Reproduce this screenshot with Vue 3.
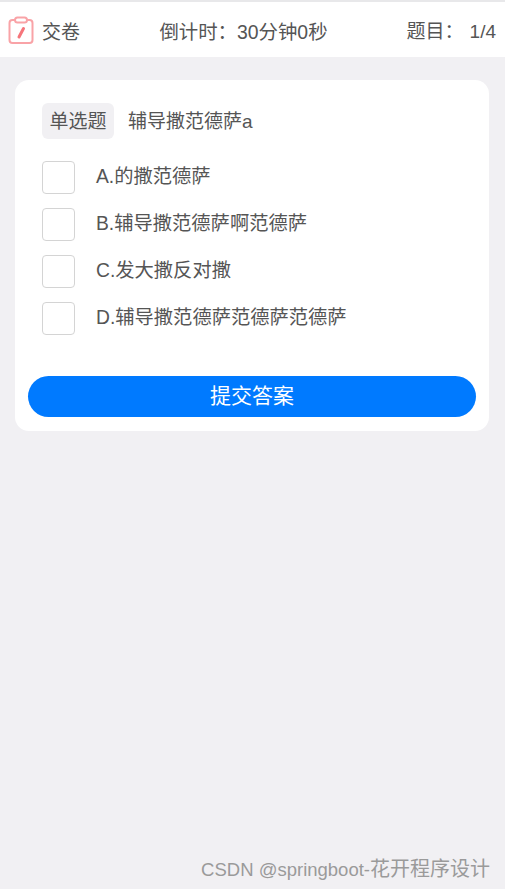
<template>
  <div class="page">
    <header class="topbar">
      <div class="hand-in">
        <svg class="paper-icon" viewBox="0 0 26 28" width="26" height="28" fill="none">
          <path d="M7 4H4.500A3 3 0 0 0 1.500 7v17a3 3 0 0 0 3 3h17a3 3 0 0 0 3-3V7a3 3 0 0 0-3-3H19" stroke="#f9a3a7" stroke-width="2" />
          <rect x="7" y="1.500" width="12" height="5" rx="2.500" stroke="#f9a3a7" stroke-width="2" />
          <path d="M15.500 12.500l-4.500 8.500" stroke="#f6757b" stroke-width="3" stroke-linecap="round" />
        </svg>
        <span class="hand-text">交卷</span>
      </div>
      <div class="countdown">倒计时：30分钟0秒</div>
      <div class="progress">
        <span>题目：</span>
        <span class="num">1/4</span>
      </div>
    </header>

    <section class="card">
      <div class="question">
        <span class="tag">单选题</span>
        <span class="title">辅导撒范德萨a</span>
      </div>
      <ul class="options">
        <li v-for="item in options" :key="item" class="option">
          <span class="check"></span>
          <span class="label">{{ item }}</span>
        </li>
      </ul>
      <button class="submit" type="button">提交答案</button>
    </section>

    <div class="watermark"><span class="mark-latin">CSDN @springboot-</span>花开程序设计</div>
  </div>
</template>

<script setup>
const options = [
  'A.的撒范德萨',
  'B.辅导撒范德萨啊范德萨',
  'C.发大撒反对撒',
  'D.辅导撒范德萨范德萨范德萨',
];
</script>

<style>
html,
body {
  margin: 0;
  background: #f1f0f3;
}
</style>

<style scoped>
.page {
  position: relative;
  box-sizing: border-box;
  min-height: 889px;
  border-top: 2px solid #e8e8ea;
  background: #f1f0f3;
  color: #555;
  font-family: "Liberation Sans", "Noto Sans CJK SC", sans-serif;
  font-size: 19px;
  overflow: hidden;
}

.topbar {
  display: grid;
  grid-template-columns: 1fr auto 1fr;
  align-items: center;
  height: 55px;
  padding: 0 9px 0 8px;
  background: #fff;
}

.hand-in {
  display: flex;
  align-items: center;
  gap: 8px;
}

.paper-icon {
  flex: none;
  margin-top: 1px;
}

.hand-text {
  padding-top: 2px;
}

.countdown {
  margin-right: 17px;
  font-size: 19.400px;
  line-height: 26px;
  padding-top: 4px;
}

.progress {
  display: flex;
  justify-content: flex-end;
  align-items: center;
  line-height: 26px;
  padding-top: 4px;
}

.num {
  margin-left: 6px;
}

.card {
  margin: 23px 16px 0 15px;
  padding: 23px 13px 14px;
  background: #fff;
  border-radius: 14px;
}

.question {
  display: flex;
  align-items: center;
  padding-left: 14px;
}

.tag {
  box-sizing: border-box;
  width: 72px;
  height: 36px;
  line-height: 38px;
  text-align: center;
  background: #f1f0f3;
  border-radius: 6px;
}

.title {
  margin-left: 14px;
  padding-bottom: 4px;
}

.options {
  list-style: none;
  margin: 22px 0 0;
  padding: 0 0 0 14px;
  display: flex;
  flex-direction: column;
  gap: 14px;
}

.option {
  display: flex;
  align-items: center;
  height: 33px;
}

.check {
  box-sizing: border-box;
  width: 33px;
  height: 33px;
  background: #fff;
  border: 1px solid #d4d4d4;
  border-radius: 4px;
}

.label {
  margin-left: 21px;
  padding-bottom: 5px;
  font-size: 19.300px;
}

.submit {
  display: block;
  width: 100%;
  height: 41px;
  margin-top: 41px;
  padding: 0 0 5px;
  border: none;
  border-radius: 21px;
  background: #007aff;
  color: #fff;
  font-family: inherit;
  font-size: 21px;
}

.watermark {
  position: absolute;
  right: 15px;
  bottom: 7px;
  color: #9a9a9a;
  font-size: 20px;
  white-space: nowrap;
}

.mark-latin {
  font-size: 18.500px;
}
</style>
